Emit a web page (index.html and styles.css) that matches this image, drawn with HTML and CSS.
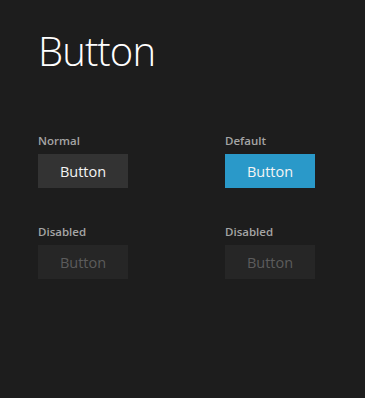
FILE: index.html
```html
<!DOCTYPE html>
<html lang="en">
<head>
    <meta charset="UTF-8">
    <title>Button</title>
    <link rel="stylesheet" href="styles.css">
</head>
<body>
    <div class="page">
        <h1 class="page-title">Button</h1>

        <div class="samples">
            <div class="sample">
                <span class="sample-label">Normal</span>
                <button class="btn">Button</button>
            </div>
            <div class="sample">
                <span class="sample-label">Default</span>
                <button class="btn btn-default">Button</button>
            </div>
            <div class="sample">
                <span class="sample-label">Disabled</span>
                <button class="btn" disabled>Button</button>
            </div>
            <div class="sample">
                <span class="sample-label">Disabled</span>
                <button class="btn btn-default" disabled>Button</button>
            </div>
        </div>
    </div>
</body>
</html>
```

FILE: styles.css
```css
* {
    margin: 0;
    padding: 0;
    box-sizing: border-box;
}

body {
    background-color: #1d1d1d;
    color: #ffffff;
    font-family: 'Open Sans', 'Noto Sans', sans-serif;
}

.page {
    padding: 23px 0 0 38px;
}

.page-title {
    font-weight: 300;
    font-size: 40px;
    line-height: 56px;
    letter-spacing: -0.9px;
}

.samples {
    display: grid;
    grid-template-columns: 187px 1fr;
    row-gap: 36px;
    margin-top: 54px;
}

.sample {
    display: flex;
    flex-direction: column;
    align-items: flex-start;
    gap: 6px;
}

.sample-label {
    font-size: 11.5px;
    font-weight: 600;
    line-height: 15px;
    color: #a5a5a5;
}

.btn {
    width: 90px;
    height: 34px;
    border: none;
    background-color: #333333;
    color: #f4f4f4;
    font-family: 'Open Sans', 'Noto Sans', sans-serif;
    font-size: 14.5px;
}

.btn-default {
    background-color: #2a99c9;
}

.btn:disabled {
    background-color: #262626;
    color: #5c5c5c;
}
```
